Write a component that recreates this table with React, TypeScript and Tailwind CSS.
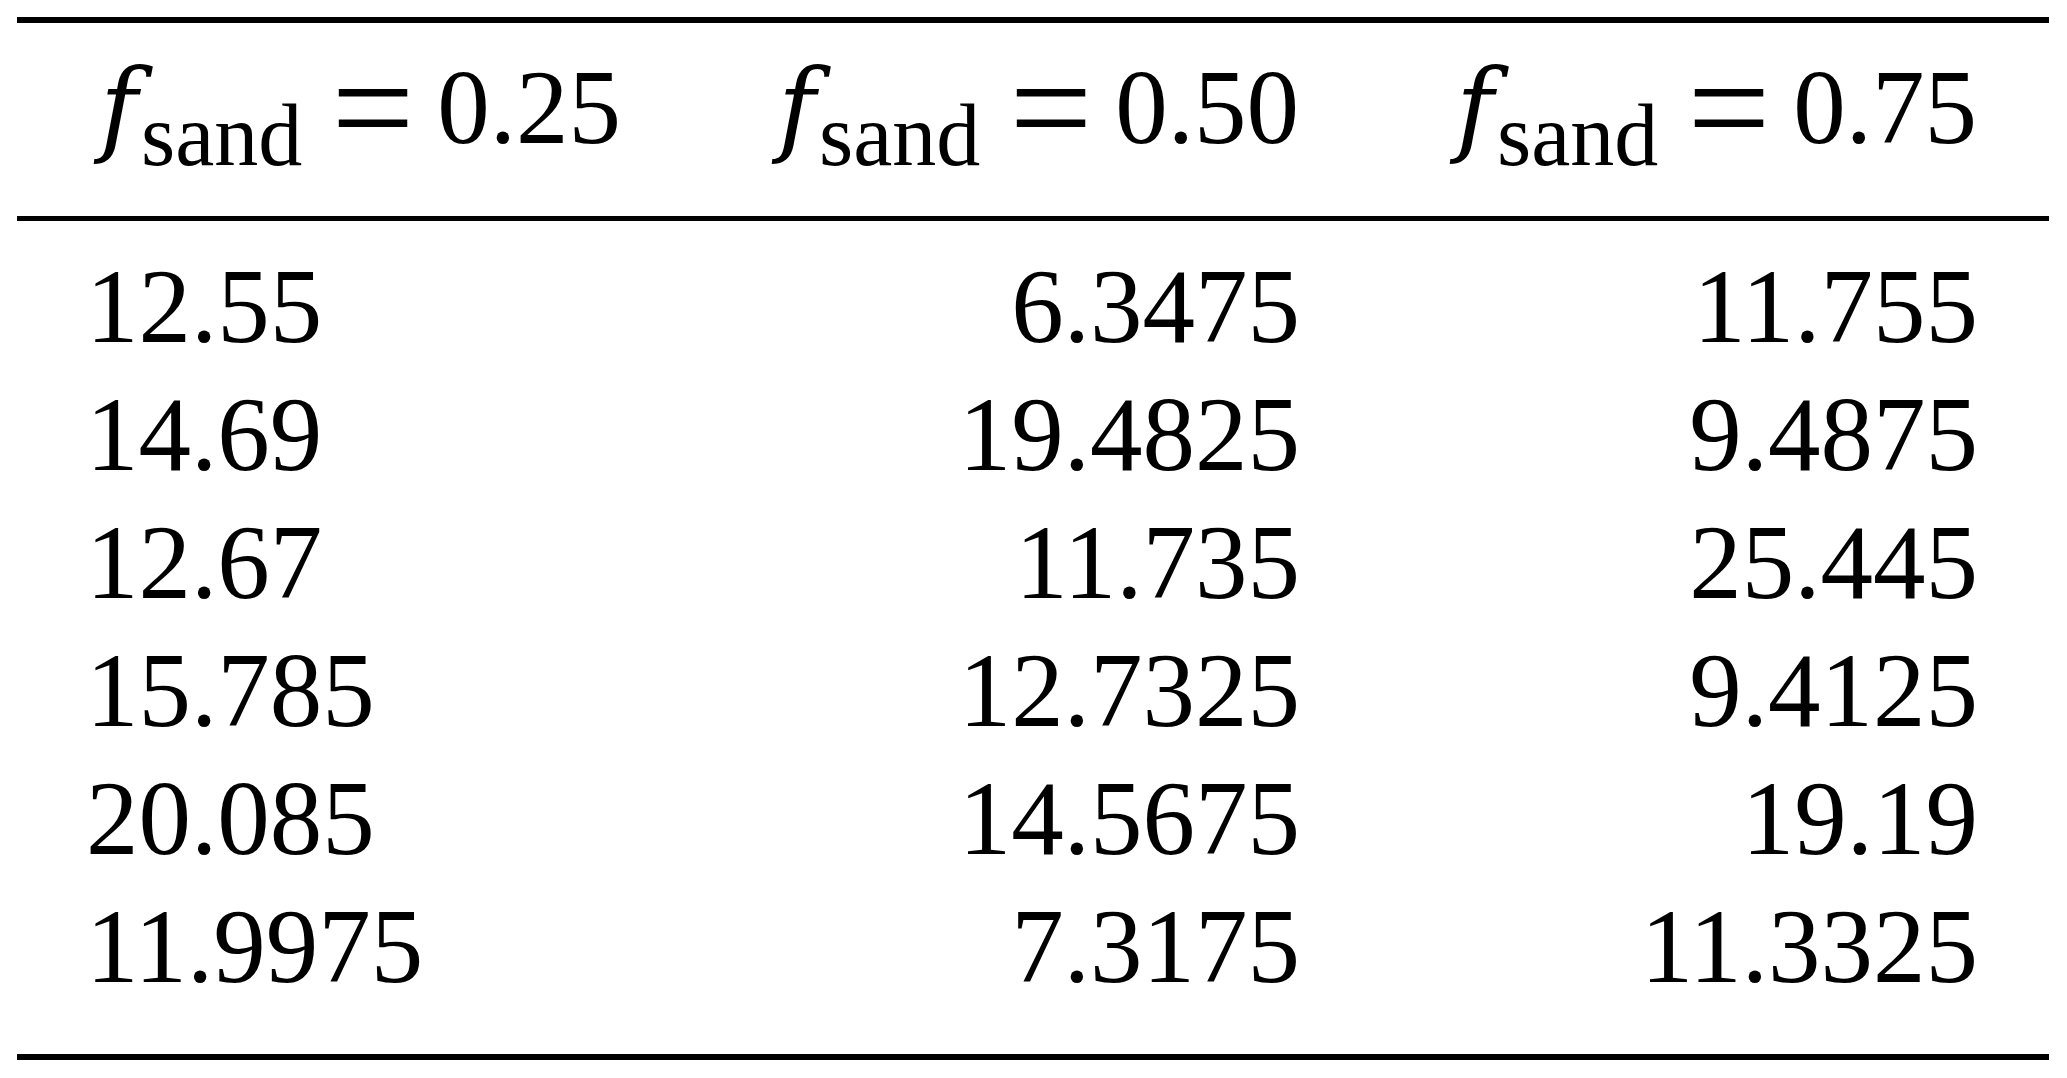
import React from 'react';

const headers = ['0.25', '0.50', '0.75'];

const rows: string[][] = [
  ['12.55', '6.3475', '11.755'],
  ['14.69', '19.4825', '9.4875'],
  ['12.67', '11.735', '25.445'],
  ['15.785', '12.7325', '9.4125'],
  ['20.085', '14.5675', '19.19'],
  ['11.9975', '7.3175', '11.3325'],
];

const FSand: React.FC<{ value: string }> = ({ value }) => (
  <div className="whitespace-nowrap">
    <span className="inline-block w-[55px] font-['DejaVu_Serif',serif] italic text-[102px] pl-[14px]">f</span>
    <span className="text-[88px] leading-none align-[-22px]">sand</span>
    <span className="inline-block w-[76px] ml-[33px] text-center [transform:scale(1.4,1.45)]">=</span>
    <span className="ml-[26px]">{value}</span>
  </div>
);

const App: React.FC = () => {
  return (
    <div className="min-h-screen w-full bg-white pl-[17px] pt-[17px] text-black font-['Liberation_Serif',serif] text-[105px] leading-[128px]">
      <div className="w-[2032px]">
        <div className="h-[6px] bg-black" />

        <div className="h-[193px] pt-[21px] pl-[69px] grid grid-cols-[536px_536px_536px] gap-x-[142px]">
          {headers.map((h) => (
            <FSand key={h} value={h} />
          ))}
        </div>

        <div className="h-[5px] bg-black" />

        <div className="pt-[22px] pl-[69px] grid grid-cols-[536px_536px_536px] gap-x-[142px]">
          {rows.map((r, i) => (
            <React.Fragment key={i}>
              <div className="text-left">{r[0]}</div>
              <div className="text-right">{r[1]}</div>
              <div className="text-right">{r[2]}</div>
            </React.Fragment>
          ))}
        </div>

        <div className="mt-[43px] h-[6px] bg-black" />
      </div>
    </div>
  );
};

export default App;
